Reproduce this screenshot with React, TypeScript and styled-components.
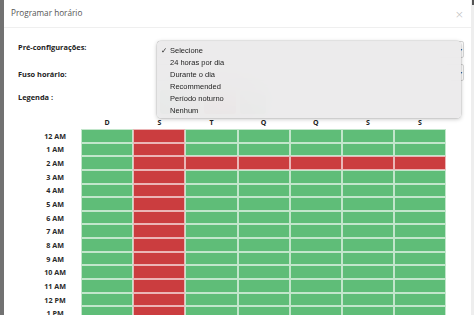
import styled, { createGlobalStyle } from "styled-components";

const GlobalStyle = createGlobalStyle`
    html, body {
        margin: 0;
        padding: 0;
        background: #ffffff;
        overflow: hidden;
    }
    * {
        box-sizing: border-box;
    }
`;

const GREEN = "#5fbd78";
const RED = "#cb3d3f";

const days = ["D", "S", "T", "Q", "Q", "S", "S"];
const hours = [
    "12 AM", "1 AM", "2 AM", "3 AM", "4 AM", "5 AM", "6 AM",
    "7 AM", "8 AM", "9 AM", "10 AM", "11 AM", "12 PM", "1 PM",
];
const menuItems = [
    "Selecione",
    "24 horas por dia",
    "Durante o dia",
    "Recommended",
    "Período noturno",
    "Nenhum",
];

function isBlocked(row: number, col: number) {
    if (col === 1) return true;
    if (row === 2 && col >= 2) return true;
    return false;
}

export default function App() {
    return (
        <>
            <GlobalStyle />
            <Screen>
                <Backdrop />
                <Modal>
                    <Header>
                        <Title>Programar horário</Title>
                        <Close>×</Close>
                    </Header>
                    <Body>
                        <Form>
                            <Label $shift={-3}>Pré-configurações:</Label>
                            <SelectWrap>
                                <Select>
                                    <Arrow>▾</Arrow>
                                </Select>
                                <Menu>
                                    {menuItems.map((item, i) => (
                                        <MenuItem key={item}>
                                            <Check>{i === 0 ? "✓" : ""}</Check>
                                            {item}
                                        </MenuItem>
                                    ))}
                                </Menu>
                            </SelectWrap>
                            <Label $shift={1}>Fuso horário:</Label>
                            <Select>
                                <Arrow>▾</Arrow>
                            </Select>
                            <Label $shift={-5}>Legenda :</Label>
                            <Legend>
                                <Swatch $color={GREEN} $w={40} />
                                <Swatch $color={RED} $w={32} />
                                <Swatch $color={GREEN} $w={26} />
                            </Legend>
                        </Form>
                        <Schedule>
                            <span />
                            {days.map((d, i) => (
                                <DayHead key={i}>{d}</DayHead>
                            ))}
                            {hours.map((h, r) => (
                                <Row key={h}>
                                    <HourLabel>{h}</HourLabel>
                                    {days.map((_, c) => (
                                        <Cell key={c} $blocked={isBlocked(r, c)} />
                                    ))}
                                </Row>
                            ))}
                        </Schedule>
                    </Body>
                </Modal>
                <Gutter>
                    <Thumb />
                </Gutter>
            </Screen>
        </>
    );
}

const Screen = styled.div`
    display: flex;
    width: 474px;
    height: 315px;
    overflow: hidden;
    font-family: "Open Sans", "Noto Sans", sans-serif;
    color: #222;
`;

const Backdrop = styled.div`
    width: 4px;
    flex: none;
    background: #727272;
`;

const Modal = styled.div`
    flex: 1;
    background: #ffffff;
    display: flex;
    flex-direction: column;
    border-top-left-radius: 3px;
`;

const Header = styled.div`
    height: 28px;
    flex: none;
    display: flex;
    align-items: center;
    justify-content: space-between;
    padding: 0 7px 0 7px;
    border-bottom: 1px solid #efefef;
`;

const Title = styled.div`
    font-size: 8.2px;
    color: #555;
    margin-top: -2px;
`;

const Close = styled.div`
    font-family: "DejaVu Sans", sans-serif;
    font-size: 11px;
    font-weight: 300;
    color: #bdbdbd;
    margin-top: 1px;
`;

const Body = styled.div`
    padding: 13px 7px 0 14px;
`;

const Form = styled.div`
    display: grid;
    grid-template-columns: 139px 1fr;
    grid-template-rows: 17px 17px 30px;
    row-gap: 6px;
    align-items: center;
`;

const Label = styled.div<{ $shift: number }>`
    font-size: 7.4px;
    font-weight: 700;
    color: #222;
    transform: translateY(${(p) => p.$shift}px);
`;

const SelectWrap = styled.div`
    position: relative;
    height: 17px;
    z-index: 2;
`;

const Select = styled.div`
    height: 17px;
    border: 1px solid #d6d6d6;
    border-radius: 2px;
    background: #fff;
    display: flex;
    align-items: center;
    justify-content: flex-end;
    padding-right: 1px;
`;

const Arrow = styled.span`
    font-family: "DejaVu Sans", sans-serif;
    font-size: 4px;
    color: #333;
`;

const Menu = styled.div`
    position: absolute;
    top: 0;
    left: 0;
    right: 3px;
    height: 77px;
    padding: 3px 0 2px 0;
    border-radius: 4px;
    background: rgba(235, 234, 235, 0.94);
    backdrop-filter: blur(20px);
    box-shadow: 0 1px 4px rgba(0, 0, 0, 0.25), 0 0 0 0.5px rgba(0, 0, 0, 0.12);
`;

const MenuItem = styled.div`
    display: flex;
    align-items: center;
    height: 12px;
    font-family: "Liberation Sans", Arial, sans-serif;
    font-size: 7.5px;
    color: #1e1e1e;
`;

const Check = styled.span`
    width: 13px;
    padding-left: 4px;
    font-family: "DejaVu Sans", sans-serif;
    font-size: 7.5px;
    font-weight: 700;
`;

const Legend = styled.div`
    display: flex;
    gap: 4px;
    padding-left: 3px;
    align-items: center;
    height: 24px;
    opacity: 0.6;
`;

const Swatch = styled.div<{ $color: string; $w: number }>`
    width: ${(p) => p.$w}px;
    height: 24px;
    border-radius: 3px;
    background: ${(p) => p.$color};
`;

const Schedule = styled.div`
    margin: 1px 0 0 11px;
    width: 417px;
    display: grid;
    grid-template-columns: repeat(8, 1fr);
`;

const DayHead = styled.div`
    height: 10px;
    text-align: center;
    font-size: 7px;
    font-weight: 700;
    line-height: 10px;
    color: #222;
    margin-bottom: 1px;
`;

const Row = styled.div`
    display: contents;
`;

const HourLabel = styled.div`
    height: 13.65px;
    display: flex;
    align-items: center;
    justify-content: center;
    font-size: 7.2px;
    font-weight: 700;
    color: #2a2a2a;
`;

const Cell = styled.div<{ $blocked: boolean }>`
    height: 13.65px;
    background: ${(p) => (p.$blocked ? RED : GREEN)};
    border: 1px solid rgba(255, 255, 255, 0.62);
`;

const Gutter = styled.div`
    width: 3px;
    flex: none;
    background: #eeeeee;
    position: relative;
`;

const Thumb = styled.div`
    position: absolute;
    top: 0;
    left: 1px;
    width: 2px;
    height: 5px;
    background: #555;
`;
